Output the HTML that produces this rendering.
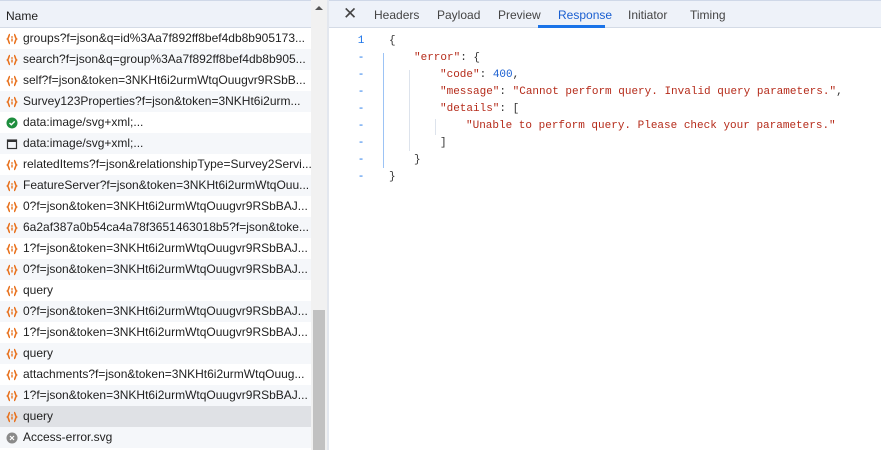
<!DOCTYPE html>
<html><head><style>
*{margin:0;padding:0;box-sizing:border-box}
body{width:881px;height:450px;overflow:hidden;background:#fff;font-family:"Liberation Sans",sans-serif;font-size:12px;color:#1f1f1f;position:relative}
#left{position:absolute;left:0;top:0;width:311px;height:450px}
#hdr{height:28px;background:#eef2f9;border-bottom:1px solid #d4dbe6;border-top:1px solid #cfd8e8;padding:8px 0 0 6px;font-size:12px}
.row{height:21px;line-height:21px;padding-left:23px;position:relative;white-space:nowrap;overflow:hidden}
.row:nth-child(even){background:#f5f7fa}
.row.sel{background:#dfe1e5}
.ic{position:absolute;left:6px;top:5px;width:12px;height:12px}
#sb{position:absolute;left:311px;top:0;width:16px;height:450px;background:#f1f1f1}
#thumb{position:absolute;left:313px;top:310px;width:12px;height:140px;background:#c1c1c1}
#div{position:absolute;left:327px;top:0;width:2px;height:450px;background:#e3e7ee}
#tabs{position:absolute;left:329px;top:0;width:552px;height:28px;background:#eef2f9;border-bottom:1px solid #d4dbe6;border-top:1px solid #cfd8e8}
.tab{position:absolute;top:7px;font-size:12px;color:#444}
#code{position:absolute;left:0;top:0;font-family:"Liberation Mono",monospace;font-size:11px}
.ln{position:absolute;left:355px;width:12px;text-align:center;color:#1a73e8}
.cl{position:absolute;white-space:pre;color:#333}
.k{color:#b52b1a}.s{color:#b52b1a}.n{color:#1a5fd1}
.g{position:absolute;width:1px}
</style></head><body>
<div id="left">
<div id="hdr">Name</div>
<div id="rows"></div>
</div>
<div id="sb"><div style="position:absolute;left:4px;top:6px;width:0;height:0;border-left:4px solid transparent;border-right:4px solid transparent;border-bottom:4px solid #555"></div></div>
<div id="thumb"></div>
<div id="div"></div>
<div id="tabs">
<span style="position:absolute;left:14px;top:3px;font-size:17px;color:#444">✕</span>
<span class="tab" style="left:45px">Headers</span>
<span class="tab" style="left:108px">Payload</span>
<span class="tab" style="left:169px">Preview</span>
<span class="tab" style="left:229px;color:#1a5fd1">Response</span>
<span style="position:absolute;left:209px;top:24px;width:67px;height:3px;background:#1a73e8"></span>
<span class="tab" style="left:299px">Initiator</span>
<span class="tab" style="left:361px">Timing</span>
</div>
<div id="code">
<div class="g" style="left:383px;top:53px;height:115px;background:#9cc3f5"></div>
<div class="g" style="left:409px;top:70px;height:81px;background:#dde3ec"></div>
<div class="g" style="left:435px;top:119px;height:16px;background:#dde3ec"></div>
</div>
<script>
const rows=[["o","groups?f=json&q=id%3Aa7f892ff8bef4db8b905173..."],["o","search?f=json&q=group%3Aa7f892ff8bef4db8b905..."],["o","self?f=json&token=3NKHt6i2urmWtqOuugvr9RSbB..."],["o","Survey123Properties?f=json&token=3NKHt6i2urm..."],["g","data:image/svg+xml;..."],["c","data:image/svg+xml;..."],["o","relatedItems?f=json&relationshipType=Survey2Servi..."],["o","FeatureServer?f=json&token=3NKHt6i2urmWtqOuu..."],["o","0?f=json&token=3NKHt6i2urmWtqOuugvr9RSbBAJ..."],["o","6a2af387a0b54ca4a78f3651463018b5?f=json&toke..."],["o","1?f=json&token=3NKHt6i2urmWtqOuugvr9RSbBAJ..."],["o","0?f=json&token=3NKHt6i2urmWtqOuugvr9RSbBAJ..."],["o","query"],["o","0?f=json&token=3NKHt6i2urmWtqOuugvr9RSbBAJ..."],["o","1?f=json&token=3NKHt6i2urmWtqOuugvr9RSbBAJ..."],["o","query"],["o","attachments?f=json&token=3NKHt6i2urmWtqOuug..."],["o","1?f=json&token=3NKHt6i2urmWtqOuugvr9RSbBAJ..."],["o","query"],["x","Access-error.svg"]];
const icons={o:'<svg class="ic" viewBox="0 0 12 12"><path d="M4 1.5C2.5 1.5 3 5 1.5 6C3 7 2.5 10.5 4 10.5M8 1.5C9.5 1.5 9 5 10.5 6C9 7 9.5 10.5 8 10.5" fill="none" stroke="#e8711d" stroke-width="1.6"/><circle cx="6" cy="4" r="0.9" fill="#e8711d"/><rect x="5.3" y="5.5" width="1.4" height="3" fill="#e8711d"/></svg>',
g:'<svg class="ic" viewBox="0 0 12 12"><circle cx="6" cy="6" r="5.5" fill="#1e8e3e"/><path d="M3.5 6l1.8 1.8L8.7 4.4" fill="none" stroke="#fff" stroke-width="1.4"/></svg>',
c:'<svg class="ic" viewBox="0 0 12 12"><rect x="1.5" y="2" width="9" height="8.5" fill="none" stroke="#333" stroke-width="1.2"/><rect x="1.5" y="2" width="9" height="2" fill="#333"/></svg>',
x:'<svg class="ic" viewBox="0 0 12 12"><circle cx="6" cy="6" r="5.5" fill="#8a8a8a"/><path d="M4 4l4 4M8 4l-4 4" stroke="#fff" stroke-width="1.2"/></svg>'};
let h='';rows.forEach((r,i)=>{h+='<div class="row'+(i==18?' sel':'')+'">'+icons[r[0]]+r[1].replace(/&/g,'&amp;')+'</div>'});
document.getElementById('rows').innerHTML=h;
const lines=[[389,'{'],[414,'<span class="k">"error"</span>: {'],[440,'<span class="k">"code"</span>: <span class="n">400</span>,'],[440,'<span class="k">"message"</span>: <span class="s">"Cannot perform query. Invalid query parameters."</span>,'],[440,'<span class="k">"details"</span>: ['],[466,'<span class="s">"Unable to perform query. Please check your parameters."</span>'],[440,']'],[414,'}'],[389,'}']];
let c='';lines.forEach((l,i)=>{const y=35+i*17;c+='<div class="ln" style="top:'+y+'px">'+(i==0?'1':'-')+'</div><div class="cl" style="left:'+l[0]+'px;top:'+y+'px">'+l[1]+'</div>'});
document.getElementById('code').insertAdjacentHTML('beforeend',c);
</script>
</body></html>
